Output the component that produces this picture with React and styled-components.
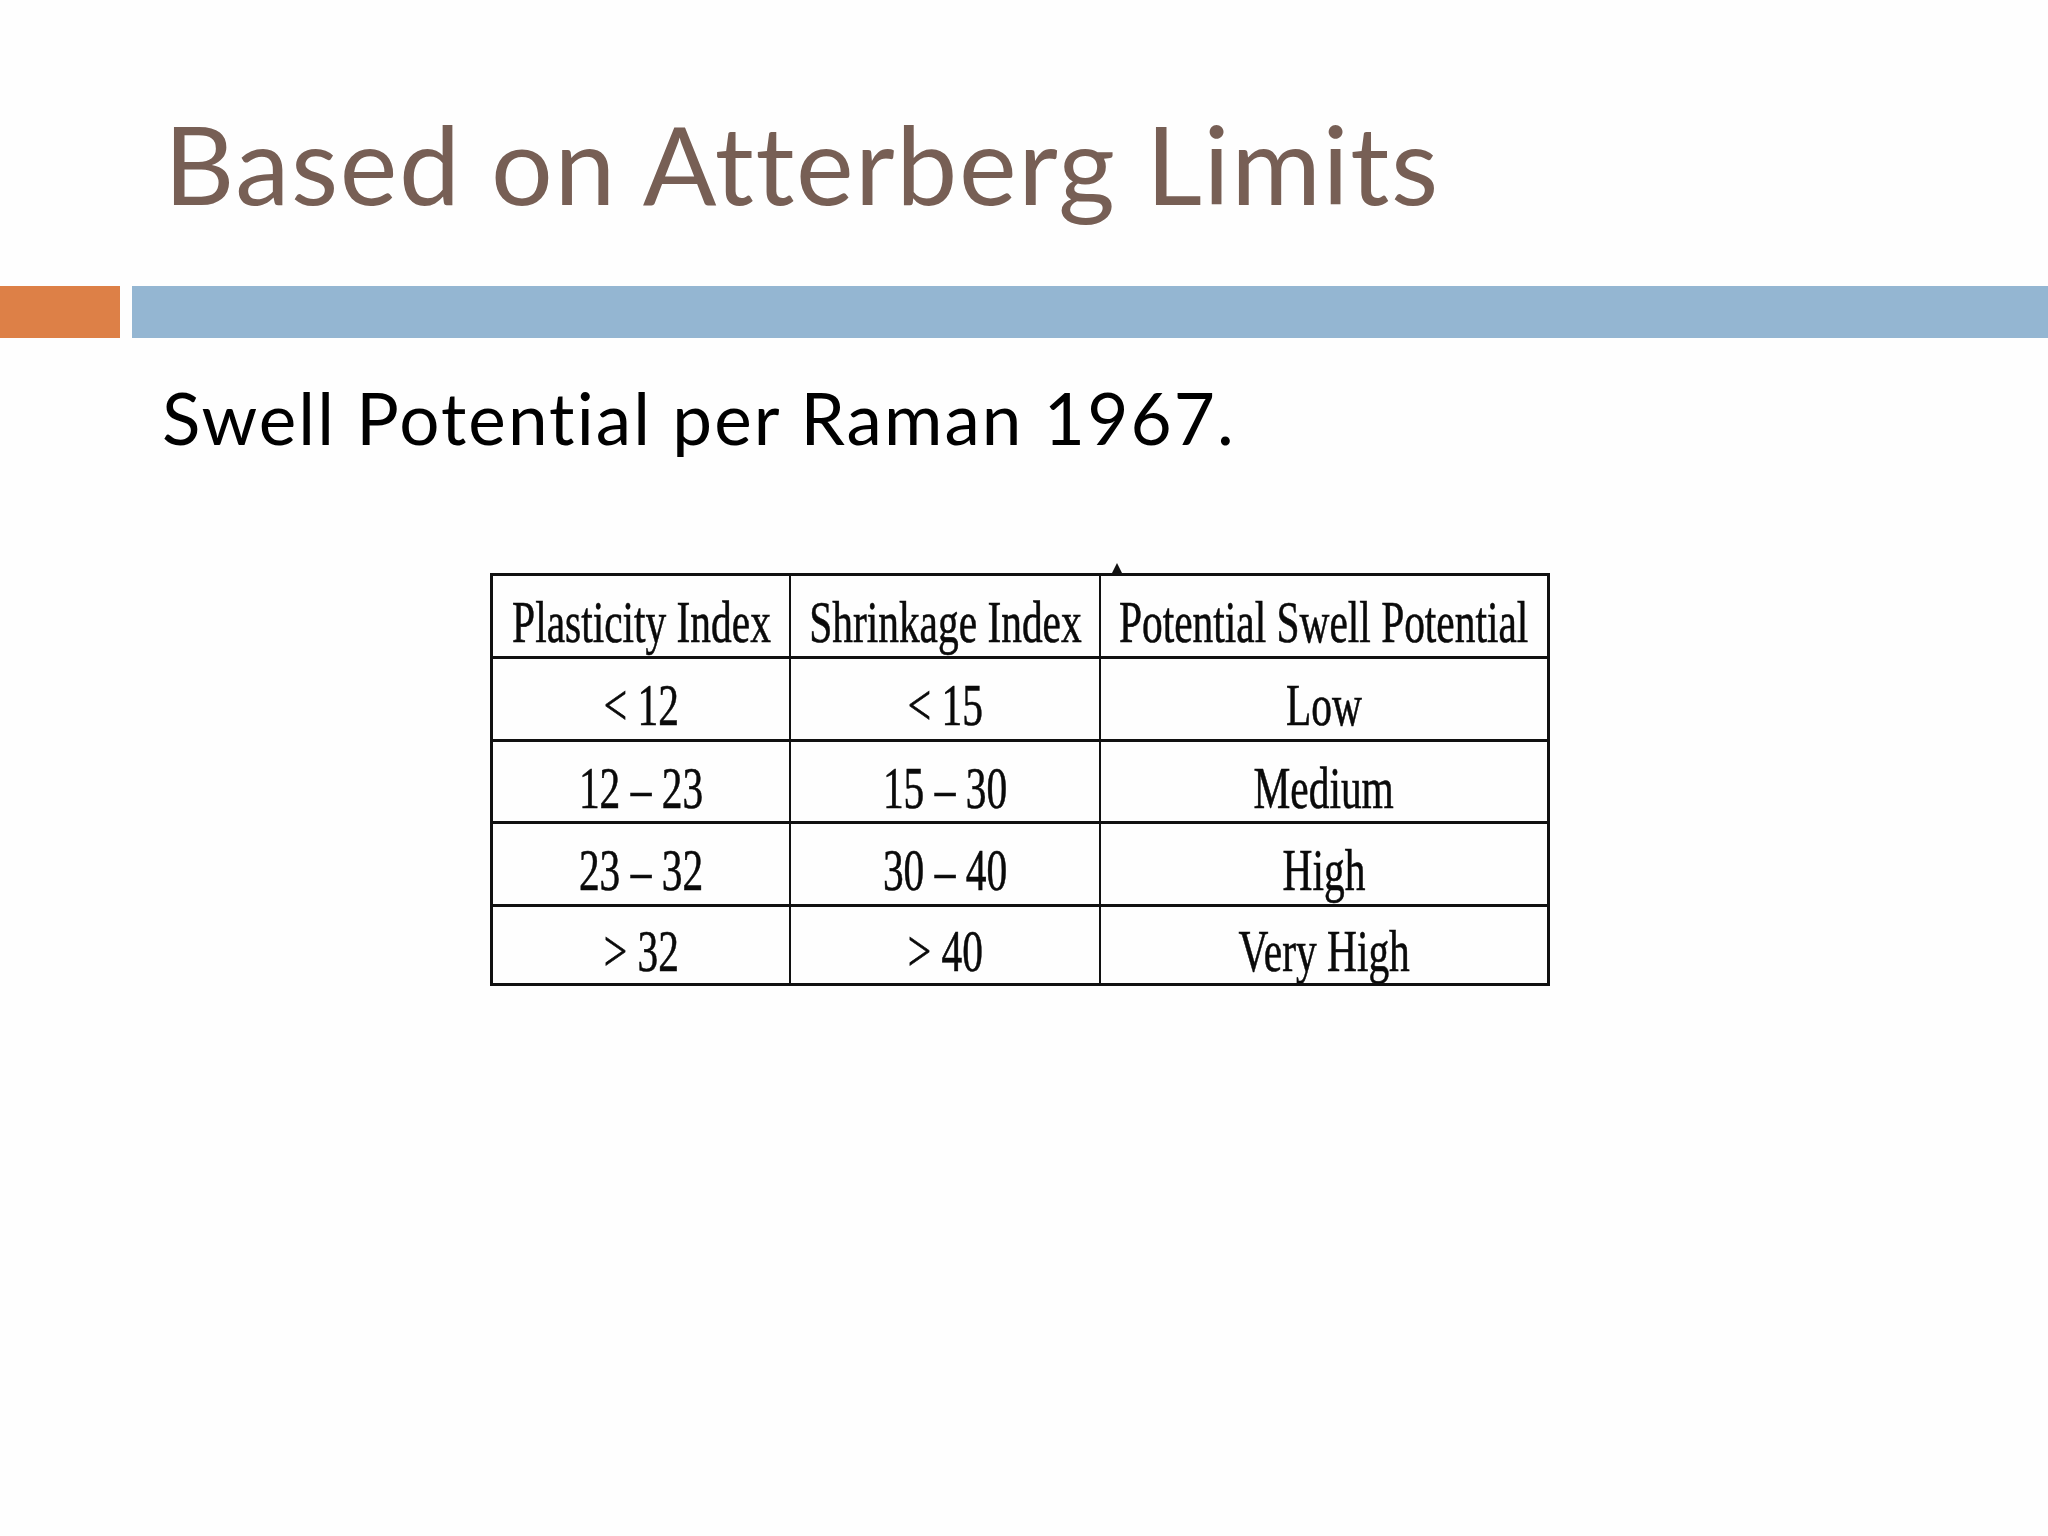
import React from "react";
import styled, { createGlobalStyle } from "styled-components";

const Global = createGlobalStyle`
  html, body { margin: 0; padding: 0; background: #fefefe; }
  body { width: 2048px; height: 1536px; overflow: hidden; }
`;

const Slide = styled.div`
  width: 2048px;
  height: 1536px;
  background: #fefefe;
  display: flex;
  flex-direction: column;
`;

const Title = styled.h1`
  margin: 108px 0 0 164px;
  font-family: Lato, "Open Sans", sans-serif;
  font-weight: 400;
  font-size: 109px;
  line-height: 109px;
  height: 109px;
  color: #775f55;
  letter-spacing: ${(p) => p.$spacing}px;
  font-variant-ligatures: none;
  white-space: nowrap;
`;

const BarRow = styled.div`
  margin-top: 69px;
  display: flex;
  gap: 12px;
  height: 52px;
`;

const Bar = styled.div`
  height: 100%;
  background: ${(p) => p.$color};
  width: ${(p) => (p.$grow ? "auto" : `${p.$w}px`)};
  flex: ${(p) => (p.$grow ? "1" : "none")};
`;

const Subtitle = styled.p`
  margin: 44px 0 0 162px;
  font-family: Lato, "Open Sans", sans-serif;
  font-size: 71px;
  line-height: 71px;
  height: 71px;
  color: #000;
  white-space: nowrap;
  font-variant-ligatures: none;
  letter-spacing: ${(p) => p.$spacing}px;
`;

const TableWrap = styled.div`
  position: relative;
  margin: 120px 0 0 490px;
  width: 1060px;
`;

const Tick = styled.div`
  position: absolute;
  left: 622px;
  top: -10px;
  width: 0;
  height: 0;
  border-left: 5px solid transparent;
  border-right: 5px solid transparent;
  border-bottom: 10px solid #111;
`;

const Grid = styled.div`
  display: grid;
  grid-template-columns: 298px 310px 449px;
  grid-template-rows: 83px 83px 82px 83px 79px;
  border-top: 3px solid #111;
  border-left: 3px solid #111;
  box-sizing: border-box;
  width: max-content;
`;

const Cell = styled.div`
  box-sizing: border-box;
  border-right: ${(p) => (p.$last ? 3 : 2)}px solid #111;
  border-bottom: 3px solid #111;
  display: flex;
  align-items: center;
  justify-content: center;
  padding-top: 12px;
  overflow: hidden;
`;

const CellText = styled.span`
  display: inline-block;
  font-family: "Liberation Serif", "Times New Roman", serif;
  font-size: 60px;
  line-height: 60px;
  color: #0a0a0a;
  white-space: nowrap;
  transform: scaleX(0.69);
  -webkit-text-stroke: 0.6px #0a0a0a;
`;

const rows = [
  ["Plasticity Index", "Shrinkage Index", "Potential Swell Potential"],
  ["< 12", "< 15", "Low"],
  ["12 – 23", "15 – 30", "Medium"],
  ["23 – 32", "30 – 40", "High"],
  ["> 32", "> 40", "Very High"],
];

export default function App() {
  return (
    <>
      <Global />
      <Slide>
        <Title $spacing={1.6}>Based on Atterberg Limits</Title>
        <BarRow>
          <Bar $color="#dd8047" $w={120} />
          <Bar $color="#94b6d2" $grow />
        </BarRow>
        <Subtitle $spacing={2.1}>Swell Potential per Raman 1967.</Subtitle>
        <TableWrap>
          <Tick />
          <Grid>
            {rows.map((r, i) =>
              r.map((c, j) => (
                <Cell key={`${i}-${j}`} $last={j === 2}>
                  <CellText>{c}</CellText>
                </Cell>
              ))
            )}
          </Grid>
        </TableWrap>
      </Slide>
    </>
  );
}
